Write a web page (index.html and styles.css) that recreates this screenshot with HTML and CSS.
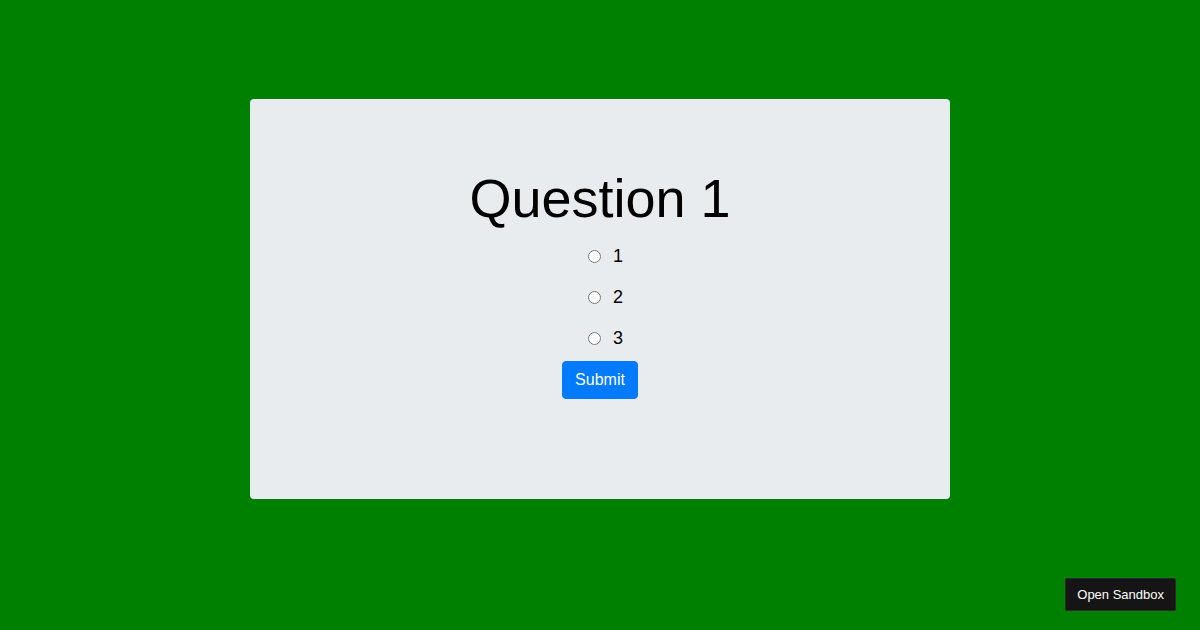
FILE: index.html
```html
<!DOCTYPE html>
<html lang="en">
<head>
	<meta charset="UTF-8">
	<meta name="viewport" content="width=device-width, initial-scale=1.0">
	<title>Quiz</title>
	<link rel="stylesheet" href="styles.css">
</head>
<body>

	<div class="page">
    	<!-- Question card -->
    	<div class="jumbotron">
        	<h1 class="question-title">Question 1</h1>

        	<form class="answers">
            	<div class="answer">
                	<input type="radio" id="answer1" name="answer" value="1">
                	<label for="answer1">1</label>
            	</div>
            	<div class="answer">
                	<input type="radio" id="answer2" name="answer" value="2">
                	<label for="answer2">2</label>
            	</div>
            	<div class="answer">
                	<input type="radio" id="answer3" name="answer" value="3">
                	<label for="answer3">3</label>
            	</div>
            	<button type="button" class="btn-submit">Submit</button>
        	</form>
    	</div>
	</div>

	<a class="sandbox-link" href="#">Open Sandbox</a>

</body>
</html>
```

FILE: styles.css
```css
	body {
    	font-family: "Liberation Sans", Arial, sans-serif;
    	background-color: #008000;
    	margin: 0;
    	padding: 0;
    	color: #000;
	}

	.page {
    	height: 630px;
    	display: flex;
    	justify-content: center;
    	align-items: center;
	}

	.jumbotron {
    	width: 700px;
    	height: 400px;
    	box-sizing: border-box;
    	padding: 64px 32px;
    	margin-bottom: 32px;
    	background-color: #e9ecef;
    	border-radius: 4px;
    	text-align: center;
	}

	.question-title {
    	font-size: 54px;
    	font-weight: normal;
    	line-height: 1.2;
    	padding-top: 3px;
    	margin: 0 0 5px;
	}

	.answers {
    	display: flex;
    	flex-direction: column;
    	align-items: center;
	}

	.answer {
    	height: 41px;
    	display: flex;
    	align-items: center;
    	padding-left: 11px;
    	font-size: 18px;
	}

	.answer input {
    	width: 13px;
    	height: 13px;
    	margin: 0 12px 0 0;
	}

	.btn-submit {
    	margin-top: 2px;
    	font-family: inherit;
    	font-size: 16px;
    	line-height: 1.5;
    	padding: 6px 12px;
    	color: #fff;
    	background-color: #007bff;
    	border: 1px solid #007bff;
    	border-radius: 4px;
    	cursor: pointer;
	}

	.sandbox-link {
    	position: fixed;
    	right: 24px;
    	bottom: 19px;
    	padding: 0 11px;
    	height: 33px;
    	line-height: 31px;
    	box-sizing: border-box;
    	font-size: 13px;
    	color: #fff;
    	text-decoration: none;
    	background-color: #151515;
    	border: 1px solid #2a2a2a;
    	border-radius: 2px;
	}
```
